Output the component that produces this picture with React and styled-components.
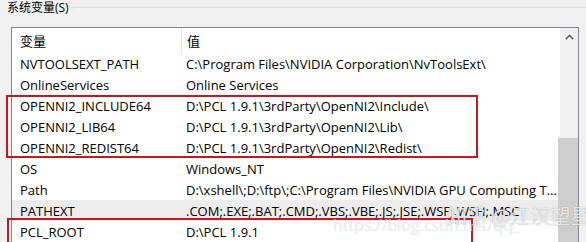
import React from 'react';
import styled, { createGlobalStyle } from 'styled-components';

const GlobalStyle = createGlobalStyle`
  html, body {
    margin: 0;
    padding: 0;
    background: #f0f0f0;
    overflow: hidden;
  }
  body {
    font-family: "Open Sans", "Noto Sans CJK SC", sans-serif;
    color: #000;
  }
`;

const rows = [
  { name: 'NVTOOLSEXT_PATH', value: 'C:\\Program Files\\NVIDIA Corporation\\NvToolsExt\\' },
  { name: 'OnlineServices', value: 'Online Services' },
  { name: 'OPENNI2_INCLUDE64', value: 'D:\\PCL 1.9.1\\3rdParty\\OpenNI2\\Include\\', group: 1 },
  { name: 'OPENNI2_LIB64', value: 'D:\\PCL 1.9.1\\3rdParty\\OpenNI2\\Lib\\', group: 1 },
  { name: 'OPENNI2_REDIST64', value: 'D:\\PCL 1.9.1\\3rdParty\\OpenNI2\\Redist\\', group: 1 },
  { name: 'OS', value: 'Windows_NT' },
  { name: 'Path', value: 'D:\\xshell\\;D:\\ftp\\;C:\\Program Files\\NVIDIA GPU Computing Toolkit\\CUDA\\v10.0\\bin' },
  { name: 'PATHEXT', value: '.COM;.EXE;.BAT;.CMD;.VBS;.VBE;.JS;.JSE;.WSF;.WSH;.MSC', hover: true },
  { name: 'PCL_ROOT', value: 'D:\\PCL 1.9.1', group: 2 },
];

export default function App() {
  const first = rows.slice(0, 2)
  const marked = rows.filter(r => r.group === 1)
  const middle = rows.slice(5, 8)
  const last = rows.filter(r => r.group === 2)

  return (
    <Page>
      <GlobalStyle />
      <GroupHeader>
        <GroupTitle>系统变量(S)</GroupTitle>
        <GroupLine />
      </GroupHeader>
      <ListBox>
        <ListContent>
          <HeaderRow>
            <HeaderCell>变量</HeaderCell>
            <HeaderCell $divider>值</HeaderCell>
          </HeaderRow>
          {first.map(r => <VarRow key={r.name} row={r} />)}
          <Marked $left={-6} $width={472} $top={0} $bottom={0}>
            {marked.map(r => <VarRow key={r.name} row={r} />)}
          </Marked>
          {middle.map(r => <VarRow key={r.name} row={r} />)}
          <Marked $left={-5} $width={466} $top={-3} $bottom={-6}>
            {last.map(r => <VarRow key={r.name} row={r} />)}
          </Marked>
        </ListContent>
        <ScrollBar>
          <ScrollArrow>
            <svg width="9" height="6" viewBox="0 0 9 6">
              <path d="M0.8 5.2 L4.5 1.5 L8.2 5.2" fill="none" stroke="#606060" strokeWidth="1.6" />
            </svg>
          </ScrollArrow>
          <ScrollTrack>
            <ScrollThumb />
          </ScrollTrack>
        </ScrollBar>
      </ListBox>
      <Watermark>
        <WatermarkUrl>https://blog.csdn.net/qq_</WatermarkUrl>
        <WatermarkName>知乎 @江汉望星</WatermarkName>
      </Watermark>
    </Page>
  );
}

function VarRow({ row }) {
  return (
    <Row $hover={row.hover}>
      <NameCell>{row.name}</NameCell>
      <ValueCell>{row.value}</ValueCell>
    </Row>
  )
}

const Page = styled.div`
  position: relative;
  width: 586px;
  height: 242px;
  overflow: hidden;
  padding-top: 1px;
  box-sizing: border-box;
`;

const GroupHeader = styled.div`
  display: flex;
  align-items: center;
  height: 14px;
  padding-left: 7px;
  gap: 2px;
`;

const GroupTitle = styled.span`
  font-size: 12px;
  line-height: 14px;
  white-space: nowrap;
  color: #000;
`;

const GroupLine = styled.div`
  flex: 1;
  height: 1px;
  background: #dcdcdc;
  margin-top: -1px;
`;

const ListBox = styled.div`
  display: flex;
  margin: 12px 0 0 11px;
  width: 568px;
  height: 230px;
  box-sizing: border-box;
  border: 1px solid #828790;
  border-bottom: none;
  background: #fff;
`;

const ListContent = styled.div`
  flex: 1;
  min-width: 0;
`;

const HeaderRow = styled.div`
  display: grid;
  grid-template-columns: 169px 1fr;
  height: 25px;
  align-items: center;
`;

const HeaderCell = styled.div`
  font-size: 13px;
  height: 25px;
  line-height: 26px;
  padding-left: ${p => (p.$divider ? '5px' : '8px')};
  border-left: ${p => (p.$divider ? '1px solid #e5e5e5' : 'none')};
`;

const Row = styled.div`
  display: grid;
  grid-template-columns: 169px 378px;
  height: 21px;
  align-items: center;
  background: ${p => (p.$hover ? '#ececec' : 'transparent')};
`;

const NameCell = styled.div`
  font-size: 13px;
  padding-left: 8px;
  white-space: nowrap;
`;

const ValueCell = styled.div`
  font-size: 13px;
  padding-left: 5px;
  white-space: nowrap;
  overflow: hidden;
  text-overflow: ellipsis;
`;

const Marked = styled.div`
  position: relative;

  &::after {
    content: "";
    position: absolute;
    left: ${p => p.$left}px;
    width: ${p => p.$width}px;
    top: ${p => p.$top}px;
    bottom: ${p => p.$bottom}px;
    border: 2px solid #c21a1f;
    box-sizing: border-box;
    pointer-events: none;
  }
`;

const ScrollBar = styled.div`
  width: 18px;
  display: flex;
  flex-direction: column;
  background: #f0f0f0;
`;

const ScrollArrow = styled.div`
  height: 17px;
  display: flex;
  align-items: center;
  justify-content: center;
`;

const ScrollTrack = styled.div`
  flex: 1;
  padding-top: 93px;
  display: flex;
  justify-content: center;
`;

const ScrollThumb = styled.div`
  width: 14px;
  flex: 1;
  background: #cdcdcd;
  margin-left: -2px;
`;

const Watermark = styled.div`
  position: absolute;
  left: 333px;
  top: 200px;
  width: 253px;
  height: 36px;
  pointer-events: none;
`;

const WatermarkUrl = styled.div`
  position: absolute;
  left: 0;
  top: 14px;
  font-family: "Open Sans", sans-serif;
  font-size: 16px;
  color: rgba(255, 255, 255, 0.7);
  text-shadow: 0 0 1px rgba(140, 140, 140, 0.45);
  white-space: nowrap;
`;

const WatermarkName = styled.div`
  position: absolute;
  left: 114px;
  top: 1px;
  font-family: "Noto Sans CJK SC", sans-serif;
  font-size: 20px;
  color: rgba(255, 255, 255, 0.8);
  text-shadow: 0 0 1px rgba(110, 110, 110, 0.7);
  white-space: nowrap;
`;
